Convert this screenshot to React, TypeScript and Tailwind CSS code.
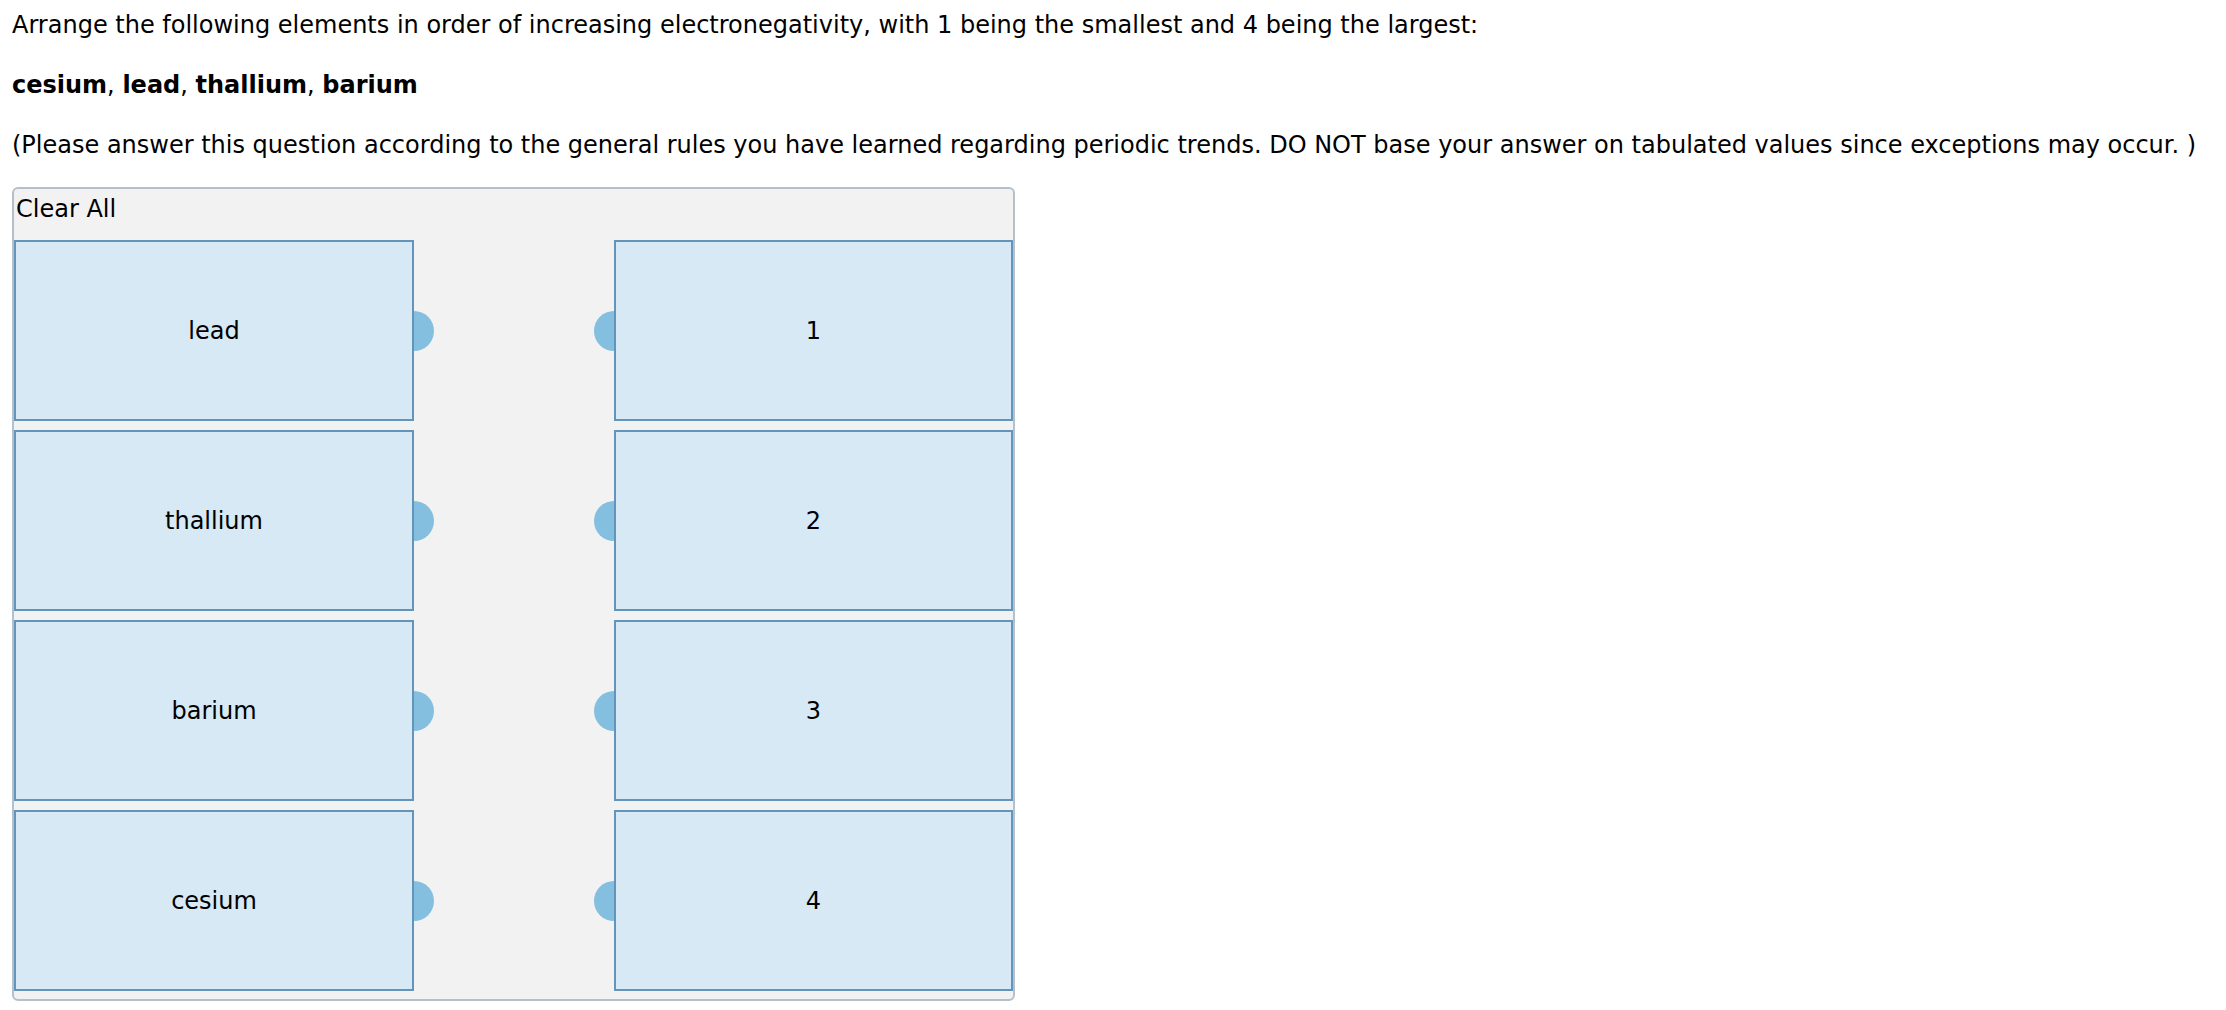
const LEFT = ["lead", "thallium", "barium", "cesium"];
const RIGHT = ["1", "2", "3", "4"];

function Tile({ label, side }: { label: string; side: "left" | "right" }) {
  return (
    <div className="relative flex h-[181px] items-center justify-center border-2 border-[#6295b9] bg-[#d6e9f4]">
      {side === "left" ? (
        <span className="absolute right-[-22px] top-1/2 h-[40px] w-[20px] -translate-y-1/2 rounded-r-full bg-[#84bfdf]" />
      ) : (
        <span className="absolute left-[-22px] top-1/2 h-[40px] w-[20px] -translate-y-1/2 rounded-l-full bg-[#84bfdf]" />
      )}
      <span className="leading-[34px]">{label}</span>
    </div>
  );
}

export default function App() {
  return (
    <div className="min-h-screen bg-white pl-3 pt-2 font-['DejaVu_Sans',sans-serif] text-[24px] text-black">
      <p className="leading-[34px]">
        Arrange the following elements in order of increasing electronegativity, with 1 being the smallest and 4 being
        the largest:
      </p>
      <p className="mt-[26px] leading-[34px]">
        <b>cesium</b>, <b>lead</b>, <b>thallium</b>, <b>barium</b>
      </p>
      <p className="mt-[26px] leading-[34px]">
        (Please answer this question according to the general rules you have learned regarding periodic trends. DO NOT
        base your answer on tabulated values since exceptions may occur. )
      </p>

      <div className="mt-[25px] w-[1003px] rounded-md border-2 border-[#b4c1cd] bg-[#f2f2f2] pb-[8px]">
        <div className="h-[51px] pl-[2px] leading-[40px]">Clear All</div>
        <div className="grid grid-cols-[400px_399px] gap-x-[200px] gap-y-[9px]">
          {LEFT.map((name, i) => (
            <div key={name} className="contents">
              <Tile label={name} side="left" />
              <Tile label={RIGHT[i]} side="right" />
            </div>
          ))}
        </div>
      </div>
    </div>
  );
}
